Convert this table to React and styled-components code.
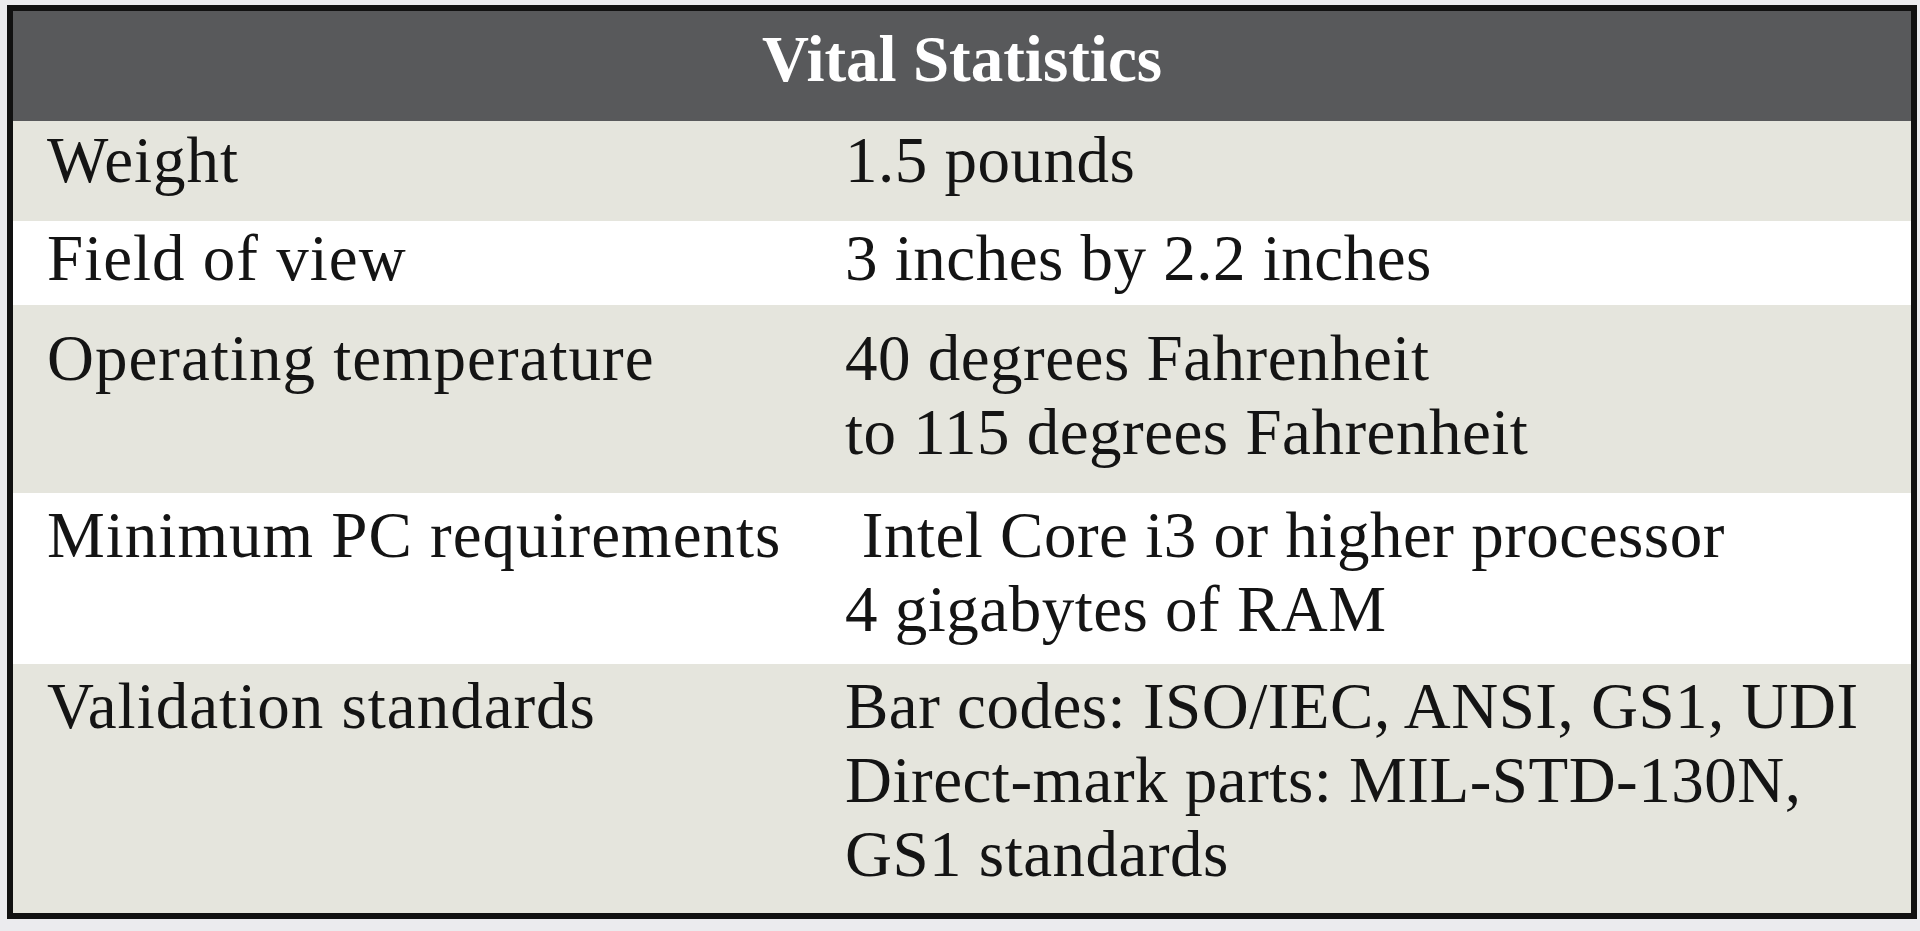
import React from "react";
import styled, {createGlobalStyle} from "styled-components";

const Global = createGlobalStyle`
  html, body {
    margin: 0;
    padding: 0;
    background: #ebebee;
  }
`;

const Frame = styled.div`
  box-sizing: border-box;
  width: 1910px;
  margin: 5px 0 0 7px;
  border: 6px solid #111;
  font-family: "Liberation Serif", "Times New Roman", serif;
  font-size: 65px;
  line-height: 74px;
  color: #141414;
`;

const Header = styled.div`
  background: #58595b;
  color: #fff;
  font-weight: bold;
  text-align: center;
  padding: 11px 0 25px;
`;

const Row = styled.div`
  display: grid;
  grid-template-columns: 798px 1fr;
  padding: ${p => p.$pt}px 0 ${p => p.$pb}px 34px;
  background: ${p => (p.$shade ? "#e5e5dd" : "#ffffff")};
`;

const Label = styled.div`
  letter-spacing: 1px;
`;

const Value = styled.div`
  white-space: pre-wrap;
  letter-spacing: 0.5px;
`;

const rows = [
  {label: "Weight", value: ["1.5 pounds"], pt: 2, pb: 24},
  {label: "Field of view", value: ["3 inches by 2.2 inches"], pt: 0, pb: 10},
  {label: "Operating temperature", value: ["40 degrees Fahrenheit", "to 115 degrees Fahrenheit"], pt: 16, pb: 24},
  {label: "Minimum PC requirements", value: [" Intel Core i3 or higher processor", "4 gigabytes of RAM"], pt: 5, pb: 18},
  {
    label: "Validation standards",
    value: ["Bar codes: ISO/IEC, ANSI, GS1, UDI", "Direct-mark parts: MIL-STD-130N,", "GS1 standards"],
    pt: 5,
    pb: 22,
  },
];

const App = () => {
  return (
    <>
      <Global/>
      <Frame>
        <Header>Vital Statistics</Header>
        {rows.map((r, i) => (
          <Row key={r.label} $shade={i % 2 === 0} $pt={r.pt} $pb={r.pb}>
            <Label>{r.label}</Label>
            <Value>
              {r.value.map(line => (
                <div key={line}>{line}</div>
              ))}
            </Value>
          </Row>
        ))}
      </Frame>
    </>
  );
};

export default App;
